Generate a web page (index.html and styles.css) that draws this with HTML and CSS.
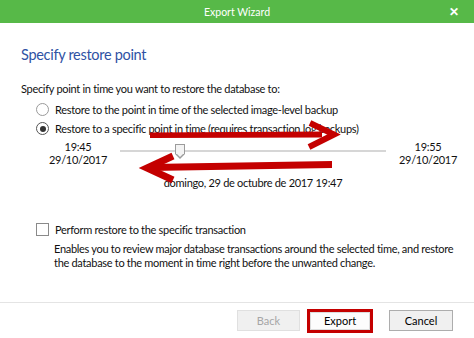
FILE: index.html
```html
<!DOCTYPE html>
<html>
<head>
<meta charset="utf-8">
<title>Export Wizard</title>
<link rel="stylesheet" href="styles.css">
</head>
<body>
<div class="wizard">
  <div class="titlebar">
    <span class="title">Export Wizard</span>
    <span class="close">&#x2715;</span>
  </div>

  <div class="content">
    <h1 class="heading">Specify restore point</h1>
    <p class="intro">Specify point in time you want to restore the database to:</p>

    <div class="option">
      <span class="radio"></span>
      <span>Restore to the point in time of the selected image-level backup</span>
    </div>
    <div class="option">
      <span class="radio checked"></span>
      <span>Restore to a specific point in time (requires transaction log backups)</span>
    </div>

    <div class="slider-row">
      <div class="stamp">19:45<br>29/10/2017</div>
      <div class="track">
        <span class="line"></span>
        <span class="thumb" style="left:55px"></span>
      </div>
      <div class="stamp">19:55<br>29/10/2017</div>
      <div class="selected">domingo, 29 de octubre de 2017 19:47</div>
    </div>

    <div class="option check-row">
      <span class="checkbox"></span>
      <span>Perform restore to the specific transaction</span>
    </div>
    <p class="note">Enables you to review major database transactions around the selected time, and restore<br>the database to the moment in time right before the unwanted change.</p>
  </div>

  <div class="footer">
    <button class="btn disabled">Back</button>
    <span class="mark"><button class="btn">Export</button></span>
    <button class="btn">Cancel</button>
  </div>

  <!-- red arrows drawn over the screenshot -->
  <svg class="arrows" width="474" height="338" viewBox="0 0 474 338">
    <polygon points="150,132.5 322,131.5 322,137.5 150,138" fill="#c40000"/>
    <polyline points="310,123 334,134.5 309,147" fill="none" stroke="#c40000" stroke-width="6"/>
    <polygon points="150,164 332,161 332,168 150,171" fill="#c40000"/>
    <polyline points="173,156 147,168 173,180" fill="none" stroke="#c40000" stroke-width="7"/>
  </svg>
</div>
</body>
</html>
```

FILE: styles.css
```css
body { margin:0; background:#fff; }
.wizard { position:relative; width:474px; height:338px; overflow:hidden; font-family:Lato,"Noto Sans",sans-serif; font-size:11px; letter-spacing:-0.3px; color:#111; }

.titlebar { height:23px; background:#57b948; color:#fff; display:flex; align-items:center; justify-content:center; position:relative; }
.title { font-size:10.5px; letter-spacing:0; }
.close { position:absolute; right:15px; top:4px; font-size:12px; font-weight:bold; }

.content { padding:0 21px; }
.heading { margin:22px 0 0; font-size:14.5px; line-height:20px; font-weight:normal; letter-spacing:-0.3px; color:#2f52a4; }
.intro { margin:17px 0 0; line-height:14px; }

.option { display:flex; align-items:center; height:19px; margin-left:15px; gap:6px; white-space:nowrap; }
.intro + .option { margin-top:4px; }
.radio { width:11px; height:11px; border:1px solid #9a9a9a; border-radius:50%; background:#fff; display:flex; align-items:center; justify-content:center; flex:none; }
.radio.checked { border-color:#555; }
.radio.checked::after { content:""; width:6px; height:6px; border-radius:50%; background:#333; }

.slider-row { display:grid; grid-template-columns:84px 266px 84px; margin-left:15px; margin-top:2px; }
.stamp { text-align:center; line-height:13px; }
.track { position:relative; }
.line { position:absolute; left:0; right:0; top:10px; height:2px; background:#d6d6d6; }
.thumb { position:absolute; top:4px; width:8px; height:9px; border:1px solid #9b9b9b; border-bottom:none; background:#f3f3f3; }
.thumb::after { content:""; position:absolute; left:-1px; top:9px; border-left:5px solid transparent; border-right:5px solid transparent; border-top:5px solid #9b9b9b; }
.thumb::before { content:""; position:absolute; left:0; top:8px; border-left:4px solid transparent; border-right:4px solid transparent; border-top:4px solid #f3f3f3; z-index:1; }
.selected { grid-column:2; text-align:center; margin-top:10px; line-height:14px; white-space:nowrap; }

.check-row { margin-top:30px; }
.checkbox { width:11px; height:11px; border:1px solid #8a8a8a; background:#fff; flex:none; }
.note { margin:3px 0 0 33px; line-height:14px; white-space:nowrap; }

.footer { position:absolute; left:0; right:0; bottom:0; height:35px; border-top:1px solid #e4e4e4; display:flex; justify-content:flex-end; align-items:center; padding-right:21px; }
.btn { font:inherit; letter-spacing:0; width:64px; height:21px; padding:0; background:#f0f0f0; border:1px solid #adadad; color:#000; }
.btn.disabled { width:63px; background:#f0f0f0; border-color:#e0e0e0; color:#a6a6a6; margin-right:7px; }
.mark { display:flex; border:3px solid #c40000; margin-right:16px; }
.mark .btn { width:60px; height:18px; background:#fcfcfc; border-color:#dcdcdc; }

.arrows { position:absolute; left:0; top:0; pointer-events:none; }
```
